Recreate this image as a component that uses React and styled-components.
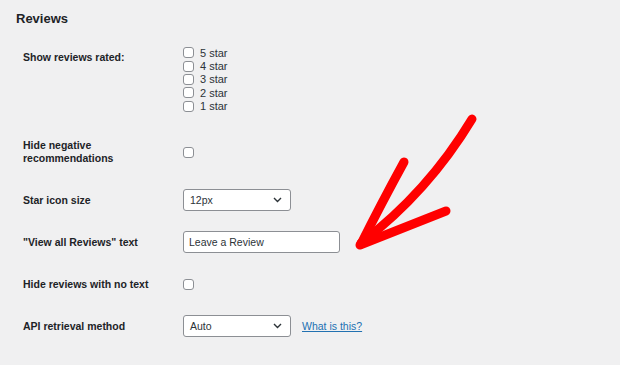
import React from 'react'
import styled, { createGlobalStyle } from 'styled-components'

const GlobalStyle = createGlobalStyle`
  html, body {
    margin: 0;
    padding: 0;
    background: #f0f0f1;
  }
  body {
    font-family: "Liberation Sans", Arial, sans-serif;
    color: #1d2327;
  }
`

const Page = styled.div`
  position: relative;
  width: 620px;
  height: 365px;
  overflow: hidden;
  box-sizing: border-box;
  padding: 10px 0 0 16px;
`

const Title = styled.h2`
  margin: 0;
  font-size: 13px;
  line-height: 17px;
  font-weight: 700;
  color: #1d2327;
`

const Table = styled.div`
  display: flex;
  flex-direction: column;
  margin-top: 9px;
  padding-left: 7px;
`

const Row = styled.div`
  display: grid;
  grid-template-columns: 160px 1fr;
  align-items: ${(p) => (p.$top ? 'start' : 'center')};
  height: ${(p) => p.$h}px;
`

const Label = styled.div`
  font-size: 10.5px;
  line-height: 13px;
  font-weight: 700;
  color: #1d2327;
  padding-top: ${(p) => p.$pt || 0}px;
`

const Field = styled.div`
  display: flex;
  align-items: center;
  gap: 11px;
  padding-top: ${(p) => p.$pt || 0}px;
`

const OptionList = styled.div`
  display: flex;
  flex-direction: column;
`

const Option = styled.label`
  display: flex;
  align-items: center;
  gap: 6px;
  height: 13.4px;
  font-size: 11px;
  color: #2c3338;
`

const Box = styled.span`
  display: inline-block;
  width: 9px;
  height: 9px;
  border: 1px solid #8c8f94;
  border-radius: 3px;
  background: #fff;
  flex: none;
`

const Select = styled.div`
  position: relative;
  display: flex;
  align-items: center;
  box-sizing: border-box;
  width: 108px;
  height: 22px;
  padding: 0 6px;
  border: 1px solid #8c8f94;
  border-radius: 3px;
  background: #fff;
  font-size: 10.5px;
  color: #2c3338;

  svg {
    position: absolute;
    right: 8px;
    top: 7px;
  }
`

const TextInput = styled.div`
  display: flex;
  align-items: center;
  box-sizing: border-box;
  width: 157px;
  height: 22px;
  padding: 0 5px;
  border: 1px solid #8c8f94;
  border-radius: 3px;
  background: #fff;
  font-size: 10.5px;
  color: #2c3338;
`

const HelpLink = styled.a`
  font-size: 10.5px;
  color: #2271b1;
  text-decoration: underline;
`

const Arrow = styled.svg`
  position: absolute;
  left: 0;
  top: 0;
  pointer-events: none;
`

function Chevron() {
  return (
    <svg width="9" height="6" viewBox="0 0 9 6">
      <path d="M1 1l3.5 3.5L8 1" fill="none" stroke="#2c3338" strokeWidth="1.4" />
    </svg>
  )
}

const stars = ['5 star', '4 star', '3 star', '2 star', '1 star']

export default function App() {
  return (
    <>
      <GlobalStyle />
      <Page>
        <Title>Reviews</Title>
        <Table>
          <Row $h={89} $top>
            <Label $pt={15}>Show reviews rated:</Label>
            <Field $pt={10}>
              <OptionList>
                {stars.map((s) => (
                  <Option key={s}>
                    <Box />
                    {s}
                  </Option>
                ))}
              </OptionList>
            </Field>
          </Row>

          <Row $h={54}>
            <Label>
              Hide negative
              <br />
              recommendations
            </Label>
            <Field>
              <Box />
            </Field>
          </Row>

          <Row $h={42}>
            <Label>Star icon size</Label>
            <Field>
              <Select>
                12px
                <Chevron />
              </Select>
            </Field>
          </Row>

          <Row $h={42}>
            <Label>"View all Reviews" text</Label>
            <Field>
              <TextInput>Leave a Review</TextInput>
            </Field>
          </Row>

          <Row $h={42}>
            <Label>Hide reviews with no text</Label>
            <Field>
              <Box />
            </Field>
          </Row>

          <Row $h={42}>
            <Label>API retrieval method</Label>
            <Field>
              <Select>
                Auto
                <Chevron />
              </Select>
              <HelpLink href="#">What is this?</HelpLink>
            </Field>
          </Row>
        </Table>

        {/* hand-drawn annotation arrow laid over the form */}
        <Arrow width="620" height="365" viewBox="0 0 620 365">
          <g fill="none" stroke="#ff0000" strokeWidth="9" strokeLinecap="round" strokeLinejoin="round">
            <path d="M472 119 Q428 192 361 243" />
            <path d="M404 162 Q381 204 361 244" />
            <path d="M360 245 Q400 229 446 211" />
          </g>
        </Arrow>
      </Page>
    </>
  )
}
